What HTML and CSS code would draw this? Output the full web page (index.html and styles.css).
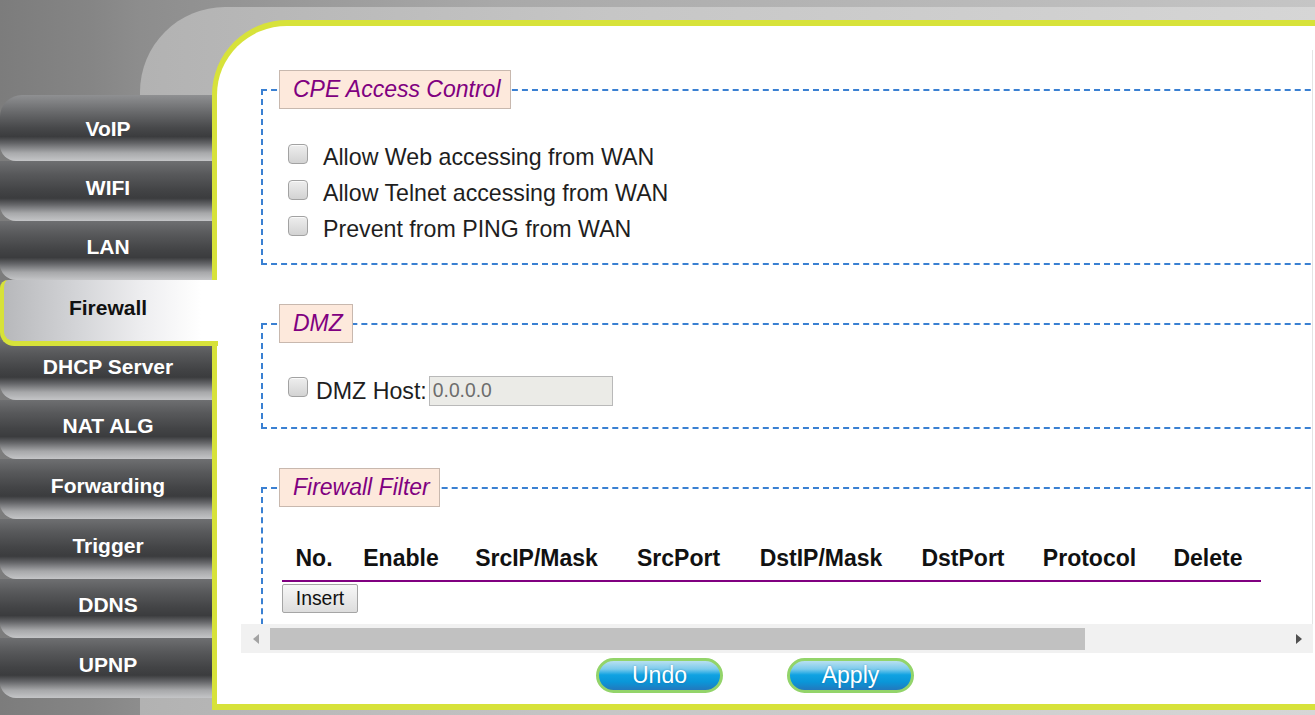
FILE: index.html
```html
<!DOCTYPE html>
<html>
<head>
<meta charset="utf-8">
<title>Firewall</title>
<link rel="stylesheet" href="styles.css">
</head>
<body>
<div class="page">
  <nav class="menu">
    <div class="item first">VoIP</div>
    <div class="item">WIFI</div>
    <div class="item">LAN</div>
    <div class="item active">Firewall</div>
    <div class="item">DHCP Server</div>
    <div class="item">NAT ALG</div>
    <div class="item">Forwarding</div>
    <div class="item">Trigger</div>
    <div class="item">DDNS</div>
    <div class="item">UPNP</div>
  </nav>
  <main class="panel">
    <div class="scroller">
      <div class="viewport">
        <fieldset class="group g-cpe">
          <legend class="legend">CPE Access Control</legend>
          <div class="opts">
            <label class="opt"><input type="checkbox" class="chk"><span>Allow Web accessing from WAN</span></label>
            <label class="opt"><input type="checkbox" class="chk"><span>Allow Telnet accessing from WAN</span></label>
            <label class="opt"><input type="checkbox" class="chk"><span>Prevent from PING from WAN</span></label>
          </div>
        </fieldset>
        <fieldset class="group g-dmz">
          <legend class="legend">DMZ</legend>
          <div class="dmz-row">
            <input type="checkbox" class="chk chk-dmz">
            <span class="host-label">DMZ Host:</span>
            <input type="text" class="host-input" value="0.0.0.0">
          </div>
        </fieldset>
        <fieldset class="group g-filter">
          <legend class="legend">Firewall Filter</legend>
          <div class="filter">
            <div class="thead">
              <span>No.</span>
              <span>Enable</span>
              <span>SrcIP/Mask</span>
              <span>SrcPort</span>
              <span>DstIP/Mask</span>
              <span>DstPort</span>
              <span>Protocol</span>
              <span>Delete</span>
            </div>
            <button class="insert">Insert</button>
          </div>
        </fieldset>
      </div>
      <div class="hscroll">
        <div class="arr"><span class="tri-left"></span></div>
        <div class="track"><div class="thumb"></div></div>
        <div class="arr"><span class="tri-right"></span></div>
      </div>
    </div>
    <div class="actions">
      <button class="pill">Undo</button>
      <button class="pill">Apply</button>
    </div>
  </main>
</div>
</body>
</html>
```
FILE: styles.css
```css
html, body {
  margin: 0;
  padding: 0;
}
body {
  width: 1315px;
  height: 715px;
  overflow: hidden;
  position: relative;
  background: linear-gradient(to right, #7c7c7c 0, #858585 90px, #8d8d8d 140px, #a9a9a9 500px, #c5c5c5 1315px);
  font-family: "Liberation Sans", Arial, sans-serif;
}
body::before {
  content: "";
  position: absolute;
  left: 140px;
  top: 7px;
  right: 0;
  bottom: 0;
  border-top-left-radius: 85px;
  background: linear-gradient(to right, #b2b2b2, #c6c6c6 40%, #d6d6d6);
}
.page {
  position: relative;
  display: grid;
  grid-template-columns: 212px 1fr;
}

/* ---------- menu ---------- */
.menu {
  padding-top: 95px;
  display: flex;
  flex-direction: column;
}
.item {
  width: 212px;
  height: 59.67px;
  box-sizing: border-box;
  padding: 0 0 6px 4px;
  display: flex;
  align-items: center;
  justify-content: center;
  color: #fff;
  font-weight: bold;
  font-size: 21px;
  border-bottom-left-radius: 16px;
  background: linear-gradient(to bottom,
    #6e6f71 0%, #58595b 22%, #434446 48%, #3b3c3e 62%,
    #66676a 73%, #a7a8aa 87%, #c4c5c7 100%);
}
.item.first {
  height: 66px;
  padding-top: 7px;
  border-top-left-radius: 22px;
  background: linear-gradient(to bottom,
    #8f9092 0%, #6a6b6d 25%, #47484a 50%, #3b3c3e 63%,
    #636467 73%, #a9aaac 88%, #c4c5c7 100%);
}
.item.active {
  position: relative;
  z-index: 2;
  width: 218px;
  height: 65.67px;
  margin-bottom: -6px;
  padding: 0 10px 5px 4px;
  color: #111;
  border-left: 4px solid #d7e23a;
  border-bottom: 5px solid #d7e23a;
  border-top-left-radius: 8px;
  border-bottom-left-radius: 14px;
  background: linear-gradient(to right, #b7b8bb 0%, #d4d5d8 35%, #eeeef0 65%, #ffffff 92%);
}

/* ---------- panel ---------- */
.panel {
  margin-top: 20px;
  height: 690px;
  box-sizing: border-box;
  border: 6px solid #d7e23a;
  border-left-width: 5px;
  border-right: 0;
  border-top-left-radius: 75px;
  background: #fff;
  padding: 24px 0 0 24px;
}
.scroller {
  width: 1072px;
}
.viewport {
  height: 574px;
  overflow: hidden;
  box-sizing: border-box;
  border-right: 1px solid #e4e4e4;
  padding: 20px 0 0 20px;
  background: #fff;
}
.group {
  margin: 0;
  width: 1120px;
  box-sizing: border-box;
  min-inline-size: 0;
  border: 2px dashed #3a80d2;
  padding: 0 0 16px 17px;
}
.group + .group {
  margin-top: 39px;
}
.legend {
  margin: 0 0 0 -1px;
  padding: 0 9px 0 13px;
  border: 1px solid #c8b8ae;
  background: #fde9dc;
  color: #800080;
  font-style: italic;
  font-size: 23px;
  line-height: 37px;
}
.opts {
  padding: 30px 0 0 8px;
}
.opt {
  display: flex;
  align-items: center;
  gap: 15px;
  height: 36px;
  font-size: 23.2px;
  color: #1e1e1e;
}
.chk {
  appearance: none;
  -webkit-appearance: none;
  flex: none;
  width: 20px;
  height: 20px;
  margin: 0 0 7px 0;
  box-sizing: border-box;
  border: 1px solid #a2a2a2;
  border-radius: 4px;
  background: linear-gradient(to bottom, #eeeeee, #d3d3d3);
  box-shadow: inset 0 1px 0 #fafafa;
}
.g-dmz {
  padding-bottom: 21px;
}
.dmz-row {
  display: flex;
  align-items: center;
  height: 30px;
  margin: 33px 0 0 8px;
  font-size: 23.2px;
  color: #1e1e1e;
}
.chk-dmz {
  margin: 0 8px 8px 0;
}
.host-input {
  margin: 0 0 0 2px;
  width: 184px;
  height: 30px;
  box-sizing: border-box;
  border: 1px solid #b9b9b9;
  background: #ebebe7;
  color: #6d6d6d;
  font-family: "Liberation Sans", Arial, sans-serif;
  font-size: 19.3px;
  padding: 0 0 0 3px;
}
.g-filter {
  padding-bottom: 60px;
}
.filter {
  margin: 34px 0 0 2px;
  width: 979px;
}
.thead {
  display: grid;
  grid-template-columns: 64px 110px 161px 123px 162px 122px 131px 106px;
  align-items: center;
  height: 41px;
  box-sizing: border-box;
  padding-bottom: 4px;
  border-bottom: 2px solid #800080;
  font-weight: bold;
  font-size: 23px;
  color: #111;
  text-align: center;
}
.insert {
  margin-top: 2px;
  width: 76px;
  height: 29px;
  box-sizing: border-box;
  padding: 0;
  border: 1px solid #a5a5a5;
  border-radius: 2px;
  background: linear-gradient(to bottom, #f7f7f7, #dddddd);
  font-family: "Liberation Sans", Arial, sans-serif;
  font-size: 19.4px;
  color: #111;
}

/* ---------- fake horizontal scrollbar ---------- */
.hscroll {
  display: flex;
  height: 29px;
  background: #f1f1f1;
}
.arr {
  flex: none;
  width: 29px;
  display: flex;
  align-items: center;
  justify-content: center;
}
.tri-left {
  width: 0;
  height: 0;
  border-top: 5px solid transparent;
  border-bottom: 5px solid transparent;
  border-right: 6px solid #a3a3a3;
}
.tri-right {
  width: 0;
  height: 0;
  border-top: 5px solid transparent;
  border-bottom: 5px solid transparent;
  border-left: 6px solid #505050;
}
.track {
  flex: 1;
  box-sizing: border-box;
  padding: 4px 0 3px;
}
.thumb {
  width: 815px;
  height: 100%;
  background: #c1c1c1;
}

/* ---------- action buttons ---------- */
.actions {
  display: flex;
  gap: 64px;
  padding-left: 355px;
  margin-top: 5px;
}
.pill {
  width: 127px;
  height: 35px;
  box-sizing: border-box;
  padding: 0;
  border: 3px solid #93d46a;
  border-radius: 18px;
  background: linear-gradient(to bottom, #b8e0f0 0%, #7ccbec 28%, #10a2e2 48%, #0a96d8 72%, #2378bd 100%);
  color: #fff;
  font-family: "Liberation Sans", Arial, sans-serif;
  font-size: 23px;
  line-height: 27px;
  text-shadow: 0 0 2px rgba(0, 60, 110, 0.35);
}
```
